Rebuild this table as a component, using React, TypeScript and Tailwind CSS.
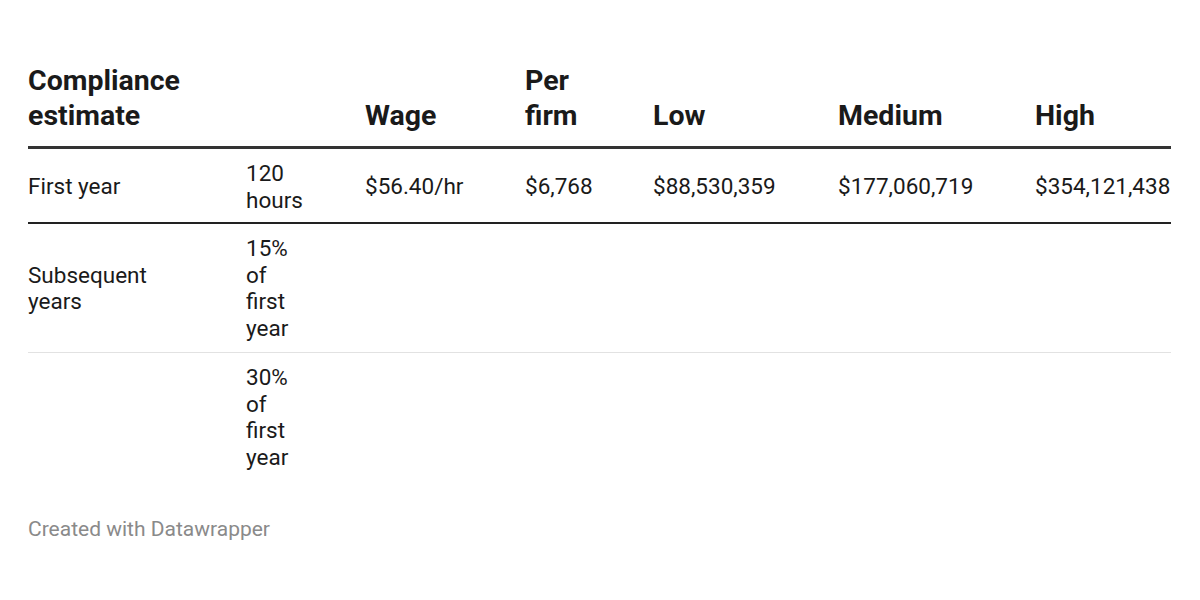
import React from "react";

const COLS = "grid w-[1143px] grid-cols-[218px_119px_160px_128px_185px_197px_136px]";

const HEAD: string[][] = [
  ["Compliance", "estimate"],
  [],
  ["Wage"],
  ["Per", "firm"],
  ["Low"],
  ["Medium"],
  ["High"],
];

const ROWS: { cells: string[][]; cls: string }[] = [
  {
    cells: [["First year"], ["120", "hours"], ["$56.40/hr"], ["$6,768"], ["$88,530,359"], ["$177,060,719"], ["$354,121,438"]],
    cls: "pt-[11px] pb-[9px] border-b-2 border-[#222]",
  },
  {
    cells: [["Subsequent", "years"], ["15%", "of", "first", "year"], [], [], [], [], []],
    cls: "py-[11px] border-b border-[#e2e2e2]",
  },
  {
    cells: [[], ["30%", "of", "first", "year"], [], [], [], [], []],
    cls: "py-[11px]",
  },
];

function Lines({ lines }: { lines: string[] }) {
  return (
    <>
      {lines.map((l, i) => (
        <div key={i} className="whitespace-nowrap">
          {l}
        </div>
      ))}
    </>
  );
}

export default function App() {
  return (
    <div className="w-[1200px] h-[600px] bg-white text-[#1a1a1a] font-['Roboto',sans-serif] overflow-hidden">
      <div className="pl-[28px] pt-[63px]">
        {/* header */}
        <div className={COLS + " border-b-[3px] border-[#333] pb-[13px] items-end text-[28.5px] leading-[35px] font-bold"}>
          {HEAD.map((h, i) => (
            <div key={i}>
              <Lines lines={h} />
            </div>
          ))}
        </div>

        {ROWS.map((r, i) => (
          <div key={i} className={COLS + " items-center text-[22.5px] leading-[26.5px] " + r.cls}>
            {r.cells.map((c, j) => (
              <div key={j}>
                <Lines lines={c} />
              </div>
            ))}
          </div>
        ))}

        <div className="mt-[35px] text-[21px] leading-[26px] text-[#8a8a8a]">Created with Datawrapper</div>
      </div>
    </div>
  );
}
